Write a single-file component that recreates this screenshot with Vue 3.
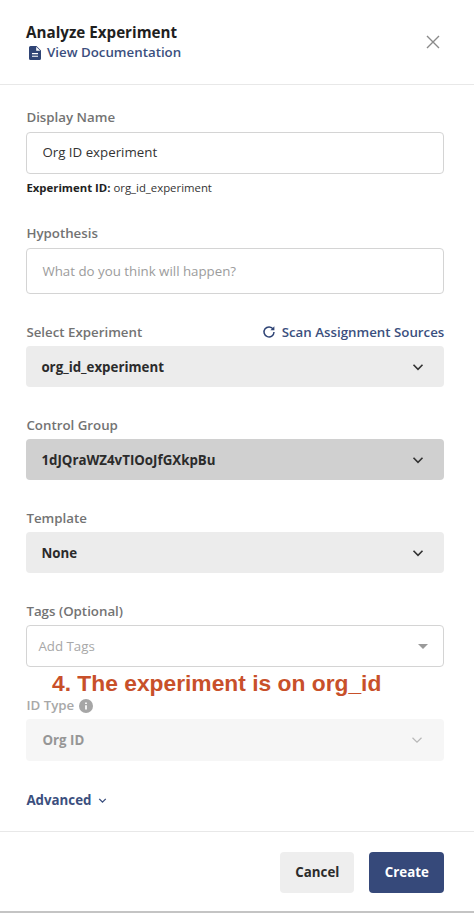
<script setup>
const chevron = 'M6 9l6 6 6-6'
</script>

<template>
  <div class="modal">
    <header class="head">
      <div>
        <div class="title">Analyze Experiment</div>
        <div class="doc">
          <svg class="doc-ic" viewBox="0 0 12 14"><path fill="#2f4475" d="M1.5 0H7.5L12 4.5V12.5A1.5 1.5 0 0 1 10.5 14H1.5A1.5 1.5 0 0 1 0 12.5V1.5A1.5 1.5 0 0 1 1.5 0Z"/><path fill="#fff" d="M7.2 .8V4.8H11.2Z"/><path stroke="#fff" stroke-width="1.1" d="M3 7.6H9M3 10.2H9"/></svg>
          <span>View Documentation</span>
        </div>
      </div>
      <svg class="close" viewBox="0 0 14 14"><path d="M1 1L13 13M13 1L1 13" stroke="#8a8a8a" stroke-width="1.4" fill="none"/></svg>
    </header>

    <main class="body">
      <section class="field f-name">
        <label>Display Name</label>
        <div class="box value">Org ID experiment</div>
        <div class="hint"><b>Experiment ID:</b> org_id_experiment</div>
      </section>

      <section class="field f-hyp">
        <label>Hypothesis</label>
        <div class="box tall placeholder">What do you think will happen?</div>
      </section>

      <section class="field f-sel">
        <div class="label-row">
          <label>Select Experiment</label>
          <span class="scan">
            <svg viewBox="0 0 14 14" class="scan-ic"><path d="M11.2 4.2A5 5 0 1 0 12 7" stroke="#2f4475" stroke-width="1.5" fill="none"/><path d="M12.4 1.2V5.2H8.4Z" fill="#2f4475"/></svg>
            Scan Assignment Sources
          </span>
        </div>
        <div class="select"><span>org_id_experiment</span><svg viewBox="0 0 24 24" class="chev"><path :d="chevron"/></svg></div>
      </section>

      <section class="field f-sel">
        <label>Control Group</label>
        <div class="select dark"><span>1dJQraWZ4vTIOoJfGXkpBu</span><svg viewBox="0 0 24 24" class="chev"><path :d="chevron"/></svg></div>
      </section>

      <section class="field f-sel">
        <label>Template</label>
        <div class="select"><span>None</span><svg viewBox="0 0 24 24" class="chev"><path :d="chevron"/></svg></div>
      </section>

      <section class="field f-sel">
        <label>Tags (Optional)</label>
        <div class="box tags">
          <span>Add Tags</span>
          <i class="caret"></i>
        </div>
      </section>

      <section class="field f-sel">
        <label class="muted">ID Type
          <svg viewBox="0 0 14 14" class="info"><circle cx="7" cy="7" r="7" fill="#a6a6a6"/><path d="M7 6.2V10.6M7 3.4V4.9" stroke="#fff" stroke-width="1.7"/></svg>
        </label>
        <div class="select disabled"><span>Org ID</span><svg viewBox="0 0 24 24" class="chev"><path :d="chevron"/></svg></div>
      </section>

      <div class="advanced">Advanced
        <svg viewBox="0 0 24 24" class="adv-ic"><path :d="chevron"/></svg>
      </div>

      <div class="note">4. The experiment is on org_id</div>
    </main>

    <footer class="foot">
      <button class="btn cancel">Cancel</button>
      <button class="btn create">Create</button>
    </footer>
  </div>
</template>

<style>
html, body { margin: 0; background: #fff; }
</style>

<style scoped>
.modal {
  width: 474px;
  height: 913px;
  box-sizing: border-box;
  border-bottom: 2px solid #c4c4c4;
  background: #fff;
  font-family: "Open Sans", "Noto Sans", sans-serif;
  font-size: 13.3px;
  color: #2b2b2b;
  display: flex;
  flex-direction: column;
  overflow: hidden;
}
.head {
  height: 85px;
  box-sizing: border-box;
  border-bottom: 1px solid #e8e8e8;
  padding: 23px 34px 0 26px;
  display: flex;
  justify-content: space-between;
  align-items: flex-start;
}
.title { font-size: 15.2px; font-weight: 700; line-height: 19px; color: #1f1f1f; }
.doc { display: flex; align-items: center; gap: 6.5px; margin-left: 2.5px; font-size: 13.3px; font-weight: 600; line-height: 19px; color: #3b4f7e; margin-top: 1px; }
.doc-ic { width: 12px; height: 14px; }
.close { width: 14px; height: 14px; margin-top: 12px; }

.body { position: relative; flex: 1; padding: 0 29.7px 0 26.4px; }
.field { display: flex; flex-direction: column; }
label { font-size: 13.3px; line-height: 19px; height: 19px; font-weight: 600; color: #737373; display: flex; align-items: center; gap: 5px; }
.field label { margin-bottom: 5px; }
.f-name { padding-top: 23px; }
.f-hyp { padding-top: 29px; }
.f-sel { padding-top: 29px; }
.f-sel > label { margin-bottom: 4px; }

.box {
  box-sizing: border-box;
  height: 42px;
  border: 1px solid #d4d4d4;
  border-radius: 4px;
  padding: 0 15px;
  display: flex;
  align-items: center;
  background: #fff;
}
.value { color: #333; font-size: 13.3px; padding-bottom: 2px; }
.tall { height: 46px; }
.placeholder { color: #9c9c9c; font-size: 13.3px; }
.hint { margin-top: 6px; font-size: 11.36px; line-height: 15px; color: #333; }
.hint b { font-weight: 700; color: #222; }

.label-row { display: flex; justify-content: space-between; align-items: center; height: 19px; margin-bottom: 4px; }
.field .label-row label { margin: 0; }
.scan { display: flex; align-items: center; gap: 5.5px; font-size: 13.3px; font-weight: 600; color: #3b4f7e; margin-bottom: 2px; }
.scan-ic { width: 14px; height: 14px; margin-left: -1px; }

.select {
  box-sizing: border-box;
  height: 41px;
  border-radius: 4px;
  background: #ececec;
  padding: 0 17px 0 15px;
  display: flex;
  align-items: center;
  justify-content: space-between;
  font-size: 13.3px;
  font-weight: 700;
  color: #2b2b2b;
}
.select.dark { background: #d0d0d0; }
.select.disabled { height: 42px; background: #f6f6f6; color: #969696; padding: 0 18px 0 16px; }
.chev { width: 18px; height: 18px; fill: none; stroke: #333; stroke-width: 2.2; }
.disabled .chev { stroke: #b8b8b8; stroke-width: 1.6; }

.tags { justify-content: space-between; padding: 0 15px 0 11px; color: #a8a8a8; }
.caret { width: 0; height: 0; border-left: 5px solid transparent; border-right: 5px solid transparent; border-top: 5px solid #9a9a9a; }

.muted { color: #a8a8a8; }
.info { width: 14px; height: 14px; }

.advanced { margin-top: 30px; display: flex; align-items: center; gap: 5px; font-size: 13.3px; font-weight: 700; line-height: 19px; color: #3b4f7e; }
.adv-ic { width: 13px; height: 13px; fill: none; stroke: #3b4f7e; stroke-width: 2.6; }

.note {
  position: absolute;
  left: 52px;
  top: 584px;
  font-family: "Liberation Sans", Arial, sans-serif;
  font-size: 22.8px;
  font-weight: 700;
  line-height: 28px;
  white-space: nowrap;
  color: #c8502a;
}

.foot {
  height: 80px;
  box-sizing: border-box;
  border-top: 1px solid #e8e8e8;
  padding: 20px 29.7px 0 0;
  display: flex;
  justify-content: flex-end;
  gap: 15px;
}
.btn { height: 41px; border: 0; border-radius: 4px; font-family: inherit; font-size: 13.3px; font-weight: 700; padding: 0 0 1px; }
.cancel { width: 74px; background: #eeeeee; color: #2b2b2b; }
.create { width: 75px; background: #36497a; color: #fff; }
</style>
